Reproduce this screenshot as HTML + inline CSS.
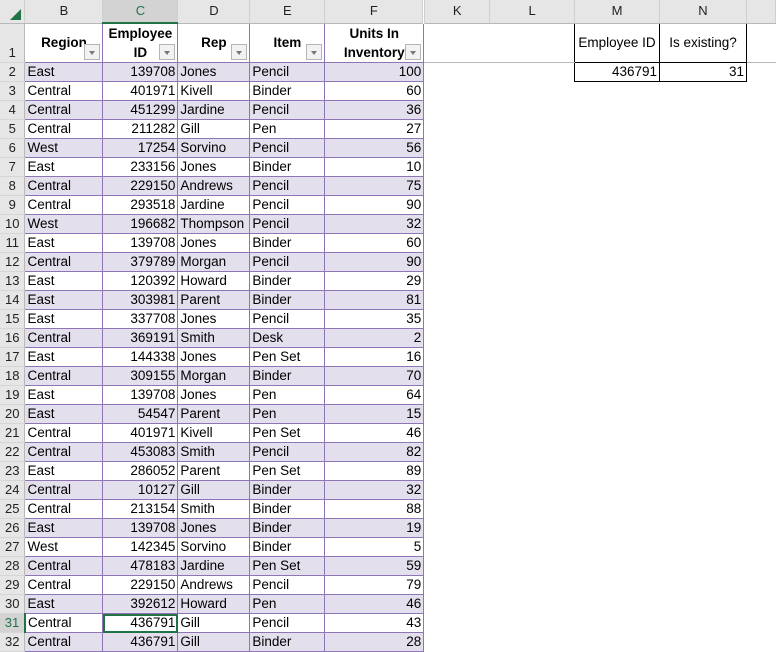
<!DOCTYPE html>
<html><head><meta charset="utf-8"><style>
body{margin:0;width:776px;height:638px;overflow:hidden;background:#fff;font-family:"Liberation Sans",Arial,sans-serif;font-size:13.5px;color:#000}
table{border-collapse:collapse;table-layout:fixed;position:absolute;left:0;top:0}
td{padding:0 2px;white-space:nowrap;overflow:hidden;height:18px;line-height:18px;border:none}
tr.ch td{background:#e6e6e6;text-align:center;height:22px;border-right:1px solid #cfcfcf;border-bottom:1px solid #b8b8b8;color:#222;font-size:13px}
tr.ch td.sel{background:#d3d3d3;color:#217346;border-bottom:2px solid #217346}
td.rn{background:#e6e6e6;text-align:center;border-right:1px solid #b8b8b8;border-bottom:1px solid #d6d6d6;color:#222;padding:0;font-size:13px}
td.rn.sel{background:#d3d3d3;color:#217346;border-right:2px solid #217346}
td.t{border-right:1px solid #8e75b4;border-bottom:1px solid #8e75b4}
tr.b td.t{background:#e4dfec}
td.r{text-align:right}
tr.h td{height:38px;vertical-align:bottom;line-height:19px}
tr.h td.t{font-weight:bold;text-align:center;position:relative;border-bottom:1px solid #8e75b4;vertical-align:middle}
.fb{position:absolute;right:2px;bottom:2px;width:16px;height:16px;border:1px solid #b5b5b5;background:#f2f2f2;box-sizing:border-box}
.fb:after{content:"";position:absolute;left:4px;top:6px;border-left:3px solid transparent;border-right:3px solid transparent;border-top:4px solid #777}
td.bk{border:1px solid #000;text-align:right}
tr.h td.bk{text-align:center;vertical-align:middle;font-weight:normal}
td.gl{border-bottom:1px solid #b8b8b8}
.cur{outline:2px solid #217346;outline-offset:-2px}
</style></head><body>
<table>
<colgroup><col style="width:25px"><col style="width:78px"><col style="width:75px"><col style="width:72px"><col style="width:75px"><col style="width:99px"><col style="width:66px"><col style="width:85px"><col style="width:85px"><col style="width:87px"><col style="width:29px"></colgroup>
<tr class="ch"><td style="position:relative"><div style="position:absolute;right:3px;bottom:3px;border-left:11px solid transparent;border-bottom:11px solid #217346"></div></td><td>B</td><td class="sel">C</td><td>D</td><td>E</td><td style="border-right:3px double #cfcfcf">F</td><td>K</td><td>L</td><td>M</td><td>N</td><td></td></tr>
<tr class="h"><td class="rn">1</td><td class="t">Region<div class="fb"></div></td><td class="t">Employee<br>ID<div class="fb"></div></td><td class="t">Rep<div class="fb"></div></td><td class="t">Item<div class="fb"></div></td><td class="t">Units In<br>Inventory<div class="fb"></div></td><td class="gl"></td><td class="gl"></td><td class="bk">Employee ID</td><td class="bk">Is existing?</td><td class="gl"></td></tr>
<tr class="b"><td class="rn">2</td><td class="t">East</td><td class="t r">139708</td><td class="t">Jones</td><td class="t">Pencil</td><td class="t r">100</td><td></td><td></td><td class="bk">436791</td><td class="bk">31</td><td></td></tr>
<tr><td class="rn">3</td><td class="t">Central</td><td class="t r">401971</td><td class="t">Kivell</td><td class="t">Binder</td><td class="t r">60</td></tr>
<tr class="b"><td class="rn">4</td><td class="t">Central</td><td class="t r">451299</td><td class="t">Jardine</td><td class="t">Pencil</td><td class="t r">36</td></tr>
<tr><td class="rn">5</td><td class="t">Central</td><td class="t r">211282</td><td class="t">Gill</td><td class="t">Pen</td><td class="t r">27</td></tr>
<tr class="b"><td class="rn">6</td><td class="t">West</td><td class="t r">17254</td><td class="t">Sorvino</td><td class="t">Pencil</td><td class="t r">56</td></tr>
<tr><td class="rn">7</td><td class="t">East</td><td class="t r">233156</td><td class="t">Jones</td><td class="t">Binder</td><td class="t r">10</td></tr>
<tr class="b"><td class="rn">8</td><td class="t">Central</td><td class="t r">229150</td><td class="t">Andrews</td><td class="t">Pencil</td><td class="t r">75</td></tr>
<tr><td class="rn">9</td><td class="t">Central</td><td class="t r">293518</td><td class="t">Jardine</td><td class="t">Pencil</td><td class="t r">90</td></tr>
<tr class="b"><td class="rn">10</td><td class="t">West</td><td class="t r">196682</td><td class="t">Thompson</td><td class="t">Pencil</td><td class="t r">32</td></tr>
<tr><td class="rn">11</td><td class="t">East</td><td class="t r">139708</td><td class="t">Jones</td><td class="t">Binder</td><td class="t r">60</td></tr>
<tr class="b"><td class="rn">12</td><td class="t">Central</td><td class="t r">379789</td><td class="t">Morgan</td><td class="t">Pencil</td><td class="t r">90</td></tr>
<tr><td class="rn">13</td><td class="t">East</td><td class="t r">120392</td><td class="t">Howard</td><td class="t">Binder</td><td class="t r">29</td></tr>
<tr class="b"><td class="rn">14</td><td class="t">East</td><td class="t r">303981</td><td class="t">Parent</td><td class="t">Binder</td><td class="t r">81</td></tr>
<tr><td class="rn">15</td><td class="t">East</td><td class="t r">337708</td><td class="t">Jones</td><td class="t">Pencil</td><td class="t r">35</td></tr>
<tr class="b"><td class="rn">16</td><td class="t">Central</td><td class="t r">369191</td><td class="t">Smith</td><td class="t">Desk</td><td class="t r">2</td></tr>
<tr><td class="rn">17</td><td class="t">East</td><td class="t r">144338</td><td class="t">Jones</td><td class="t">Pen Set</td><td class="t r">16</td></tr>
<tr class="b"><td class="rn">18</td><td class="t">Central</td><td class="t r">309155</td><td class="t">Morgan</td><td class="t">Binder</td><td class="t r">70</td></tr>
<tr><td class="rn">19</td><td class="t">East</td><td class="t r">139708</td><td class="t">Jones</td><td class="t">Pen</td><td class="t r">64</td></tr>
<tr class="b"><td class="rn">20</td><td class="t">East</td><td class="t r">54547</td><td class="t">Parent</td><td class="t">Pen</td><td class="t r">15</td></tr>
<tr><td class="rn">21</td><td class="t">Central</td><td class="t r">401971</td><td class="t">Kivell</td><td class="t">Pen Set</td><td class="t r">46</td></tr>
<tr class="b"><td class="rn">22</td><td class="t">Central</td><td class="t r">453083</td><td class="t">Smith</td><td class="t">Pencil</td><td class="t r">82</td></tr>
<tr><td class="rn">23</td><td class="t">East</td><td class="t r">286052</td><td class="t">Parent</td><td class="t">Pen Set</td><td class="t r">89</td></tr>
<tr class="b"><td class="rn">24</td><td class="t">Central</td><td class="t r">10127</td><td class="t">Gill</td><td class="t">Binder</td><td class="t r">32</td></tr>
<tr><td class="rn">25</td><td class="t">Central</td><td class="t r">213154</td><td class="t">Smith</td><td class="t">Binder</td><td class="t r">88</td></tr>
<tr class="b"><td class="rn">26</td><td class="t">East</td><td class="t r">139708</td><td class="t">Jones</td><td class="t">Binder</td><td class="t r">19</td></tr>
<tr><td class="rn">27</td><td class="t">West</td><td class="t r">142345</td><td class="t">Sorvino</td><td class="t">Binder</td><td class="t r">5</td></tr>
<tr class="b"><td class="rn">28</td><td class="t">Central</td><td class="t r">478183</td><td class="t">Jardine</td><td class="t">Pen Set</td><td class="t r">59</td></tr>
<tr><td class="rn">29</td><td class="t">Central</td><td class="t r">229150</td><td class="t">Andrews</td><td class="t">Pencil</td><td class="t r">79</td></tr>
<tr class="b"><td class="rn">30</td><td class="t">East</td><td class="t r">392612</td><td class="t">Howard</td><td class="t">Pen</td><td class="t r">46</td></tr>
<tr><td class="rn sel">31</td><td class="t">Central</td><td class="t r cur">436791</td><td class="t">Gill</td><td class="t">Pencil</td><td class="t r">43</td></tr>
<tr class="b"><td class="rn">32</td><td class="t">Central</td><td class="t r">436791</td><td class="t">Gill</td><td class="t">Binder</td><td class="t r">28</td></tr>
</table>
</body></html>
